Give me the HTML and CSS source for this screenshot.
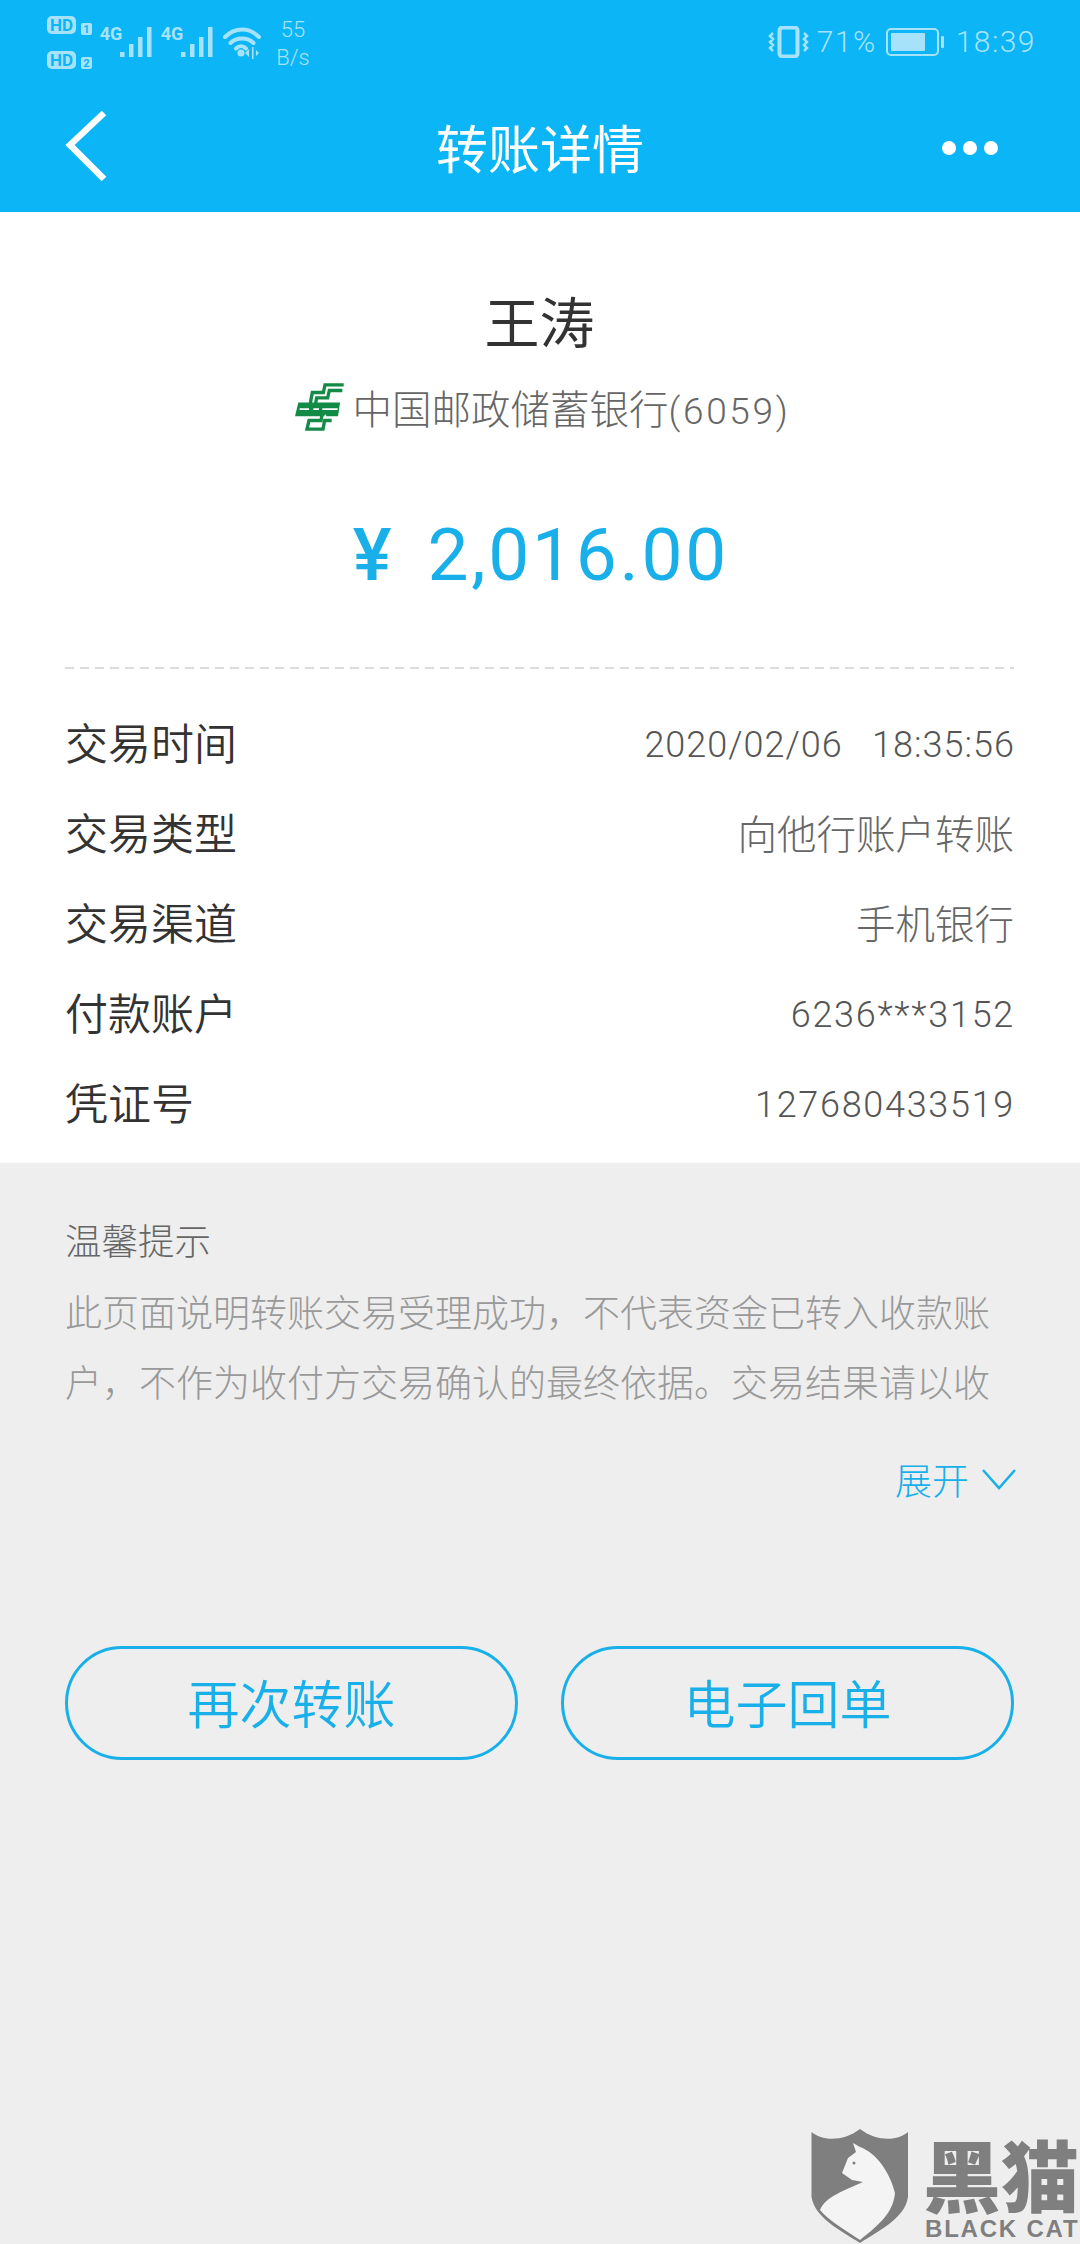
FILE: index.html
```html
<!DOCTYPE html>
<html lang="zh-CN">
<head>
<meta charset="utf-8">
<title>转账详情</title>
<link rel="stylesheet" href="styles.css">
</head>
<body>
<div class="page">
  <header class="top">
    <div class="status">
      <svg class="status-left" width="262" height="72" viewBox="0 0 262 72">
        <g class="sb-fill">
          <rect x="47" y="16" width="29" height="18" rx="5"/>
          <rect x="47" y="51" width="29" height="18" rx="5"/>
          <rect x="81" y="23" width="11" height="12" rx="2"/>
          <rect x="81" y="57" width="11" height="12" rx="2"/>
          <rect x="120" y="52" width="4.500" height="5"/>
          <rect x="129" y="44" width="4.500" height="13"/>
          <rect x="138" y="37" width="4.500" height="20"/>
          <rect x="147" y="27" width="4.500" height="30"/>
          <rect x="181" y="52" width="4.500" height="5"/>
          <rect x="190" y="44" width="4.500" height="13"/>
          <rect x="199" y="37" width="4.500" height="20"/>
          <rect x="208" y="27" width="4.500" height="30"/>
          <circle cx="241" cy="53" r="3.500"/>
          <path d="M249 49v8l-4-4zM252 47h1.500v12H252zM256 50l3 3-3 3z"/>
        </g>
        <text class="sb-hd" x="61.500" y="31">HD</text>
        <text class="sb-hd" x="61.500" y="66">HD</text>
        <text class="sb-num" x="86.500" y="33">1</text>
        <text class="sb-num" x="86.500" y="67">2</text>
        <text class="sb-4g" x="111" y="40">4G</text>
        <text class="sb-4g" x="172" y="40">4G</text>
        <g class="sb-stroke">
          <path d="M225 37c10-10 24-10 34 0"/>
          <path d="M230.500 43c6-6 17-6 23 0"/>
          <path d="M236 48.500c3-3 7-3 10 0"/>
        </g>
      </svg>
      <div class="speed"><span>55</span><span>B/s</span></div>
      <div class="status-right">
        <svg width="41" height="32" viewBox="0 0 41 32">
          <rect class="sb-stroke" x="11.500" y="1.500" width="18" height="29" rx="3"/>
          <path class="sb-thin" d="M5 7l-3 3 3 3-3 3 3 3-3 3 3 3M36 7l3 3-3 3 3 3-3 3 3 3-3 3"/>
        </svg>
        <span class="pct">71%</span>
        <svg class="batt" width="58" height="28" viewBox="0 0 58 28">
          <rect class="batt-box" x="1" y="1" width="51" height="26" rx="4"/>
          <rect class="batt-level" x="5" y="5" width="34" height="18" rx="1"/>
          <rect class="batt-level" x="55" y="8" width="3" height="12" rx="1"/>
        </svg>
        <span class="clock">18:39</span>
      </div>
    </div>
    <div class="nav">
      <svg class="back" width="44" height="72" viewBox="0 0 44 72">
        <path d="M40 3L6 35l34 34"/>
      </svg>
      <h1 class="title">转账详情</h1>
      <div class="dots"><i></i><i></i><i></i></div>
    </div>
  </header>

  <section class="card">
    <div class="name">王涛</div>
    <div class="bank">
      <svg class="psbc" width="50" height="48" viewBox="37 38 150 143">
        <path class="psbc-line" d="M186 43H130L125 66H92L86 98"/>
        <path class="psbc-line" d="M182 60H143L138 82H105L102 98"/>
        <path class="psbc-band" d="M50 96H175L169 137H40Z"/>
        <path class="psbc-gap" d="M54 116H82M95 116H112M122 116H168"/>
        <path class="psbc-gap" d="M132 128L127 160H88"/>
        <path class="psbc-line" d="M165 128H122L118 150H82L76 176H124L129 150H150"/>
      </svg>
      <span>中国邮政储蓄银行<span class="bank-no">(6059)</span></span>
    </div>
    <div class="amount"><span class="yen">¥</span><span>2,016.00</span></div>
    <div class="rule"></div>
    <div class="rows">
      <div class="row"><span class="k">交易时间</span><span class="num date">2020/02/06&nbsp;&nbsp;&nbsp;18:35:56</span></div>
      <div class="row"><span class="k">交易类型</span><span class="v">向他行账户转账</span></div>
      <div class="row"><span class="k">交易渠道</span><span class="v">手机银行</span></div>
      <div class="row"><span class="k">付款账户</span><span class="num">6236***3152</span></div>
      <div class="row"><span class="k">凭证号</span><span class="num">127680433519</span></div>
    </div>
  </section>

  <section class="tips">
    <div class="tips-title">温馨提示</div>
    <p class="tips-text">此页面说明转账交易受理成功，不代表资金已转入收款账户，不作为收付方交易确认的最终依据。交易结果请以收</p>
    <div class="more">
      <span>展开</span>
      <svg width="36" height="24" viewBox="0 0 36 24"><path d="M2 3l16 18L34 3"/></svg>
    </div>
    <div class="actions">
      <div class="btn">再次转账</div>
      <div class="btn">电子回单</div>
    </div>
  </section>

  <svg class="mark" width="300" height="144" viewBox="0 0 300 144">
    <path class="mark-shield" d="M31.500 32C42 41 63 42 80 29C97 42 118 41 128 32V97C125 118 100 130 80 143C60 130 35 118 31.500 97Z"/>
    <path class="mark-cat" d="M73 43L80 47C97 53 110 73 115 93C113 113 100 124 80 140C65 130 48 120 40 110C45 97 65 90 83 82L72 80L62 73L68 58L76 52Z"/>
    <circle class="mark-shield" cx="74" cy="63" r="1.500"/>
    <text class="mark-cn" x="143" y="107">黑猫</text>
    <text class="mark-en" x="145" y="137">BLACK CAT</text>
  </svg>
</div>
</body>
</html>
```
FILE: styles.css
```css
* { box-sizing: border-box; }
html, body { margin: 0; padding: 0; }
body {
  width: 1080px;
  height: 2244px;
  overflow: hidden;
  font-family: "Noto Sans CJK SC", "Roboto", sans-serif;
  font-weight: 300;
  background: #eeeeee;
}
.page { position: relative; width: 1080px; height: 2244px; display: flex; flex-direction: column; }
.top { height: 212px; background: #0cb5f5; display: flex; flex-direction: column; }
.status { height: 72px; display: flex; align-items: flex-start; padding-right: 44px; color: #a6e3fb; }
.status-left { flex: none; }
.sb-fill { fill: #a6e3fb; }
.sb-stroke { fill: none; stroke: #a6e3fb; stroke-width: 4; stroke-linecap: round; }
.sb-thin { fill: none; stroke: #a6e3fb; stroke-width: 2.500; }
.sb-hd { font: 700 17px "Roboto", sans-serif; fill: #0cb5f5; text-anchor: middle; }
.sb-num { font: 700 11px "Roboto", sans-serif; fill: #0cb5f5; text-anchor: middle; }
.sb-4g { font: 700 18px "Liberation Sans Narrow", "Roboto", sans-serif; fill: #a6e3fb; text-anchor: middle; }
.speed {
  display: flex; flex-direction: column; align-items: center;
  width: 36px; margin: 16px 0 0 13px;
  font: 300 22px/28px "Roboto", sans-serif;
}
.status-right { margin-left: auto; margin-top: 26px; display: flex; align-items: center; height: 32px; font: 300 30px/32px "Roboto", sans-serif; letter-spacing: 1.500px; }
.pct { margin-left: 8px; }
.batt { margin-left: 9px; }
.batt-box { fill: none; stroke: #a6e3fb; stroke-width: 2; }
.batt-level { fill: #a6e3fb; }
.clock { margin-left: 12px; }
.nav { height: 140px; display: flex; align-items: center; justify-content: space-between; padding: 0 82px 0 64px; position: relative; }
.back { fill: none; stroke: #fff; stroke-width: 6.500; flex: none; margin-top: 8px; }
.title {
  position: absolute; left: 0; right: 0; margin: 10px 0 0; text-align: center;
  font-size: 52px; line-height: 72px; font-weight: 400; color: #fff;
}
.dots { display: flex; gap: 7px; margin-top: 12px; }
.dots i { width: 14px; height: 14px; border-radius: 50%; background: #fff; }

.card { background: #fff; height: 951px; padding: 0 66px 0 65px; display: flex; flex-direction: column; align-items: center; }
.name { margin-top: 69px; font-size: 55px; line-height: 76px; color: #333; font-weight: 400; }
.bank { margin-top: 22px; margin-left: 6px; display: flex; align-items: center; gap: 8px; font-size: 39.500px; line-height: 56px; color: #666; }
.bank-no { font: 300 37px "Roboto", sans-serif; letter-spacing: 2.700px; }
.psbc { flex: none; }
.psbc-line { fill: none; stroke: #138b46; stroke-width: 10; }
.psbc-band { fill: #138b46; }
.psbc-gap { fill: none; stroke: #fff; stroke-width: 5; }
.amount {
  margin-top: 72px; margin-left: 3px; display: flex; gap: 33px; align-items: center;
  font: 400 73px/96px "Roboto", sans-serif; letter-spacing: 2.750px; color: #19b0ea;
}
.yen { font-weight: 500; }
.rule {
  width: 100%; height: 2px; margin-top: 64px; flex: none;
  background: repeating-linear-gradient(90deg, #dcdcdc 0 9px, transparent 9px 15px);
}
.rows { width: 100%; padding-top: 27px; display: flex; flex-direction: column; }
.row { height: 90px; display: flex; align-items: center; justify-content: space-between; }
.k { font-size: 43px; color: #333; font-weight: 350; }
.v { font-size: 39.500px; color: #666; }
.num { font: 300 36px/50px "Roboto", sans-serif; letter-spacing: 1.700px; color: #555; margin-top: 8px; margin-right: -1px; }
.date { letter-spacing: 1px; }

.tips { padding: 51px 66px 0 65px; flex: 1; }
.tips-title { font-size: 36.500px; line-height: 52px; color: #666; }
.tips-text { margin: 10px 0 0; width: 940px; font-size: 37px; line-height: 70px; color: #999; height: 140px; overflow: hidden; }
.more { margin-top: 33px; margin-right: -3px; display: flex; justify-content: flex-end; align-items: center; gap: 12px; color: #19b0ea; font-size: 37px; line-height: 60px; }
.more svg { fill: none; stroke: #19b0ea; stroke-width: 2.500; }
.actions { margin-top: 137px; display: flex; justify-content: space-between; }
.btn {
  width: 453px; height: 114px; border: 3px solid #19b0ea; border-radius: 57px; padding-bottom: 4px;
  display: flex; align-items: center; justify-content: center;
  font-size: 52px; font-weight: 350; color: #19b0ea;
}
.mark { position: absolute; left: 780px; top: 2100px; }
.mark-shield { fill: #7f7f7f; }
.mark-cat { fill: #f4f4f4; }
.mark-cn { font: 900 78px "Noto Sans CJK SC", sans-serif; fill: #7f7f7f; }
.mark-en { font: 900 24px "Liberation Sans", sans-serif; fill: #7f7f7f; letter-spacing: 1.800px; }
```
